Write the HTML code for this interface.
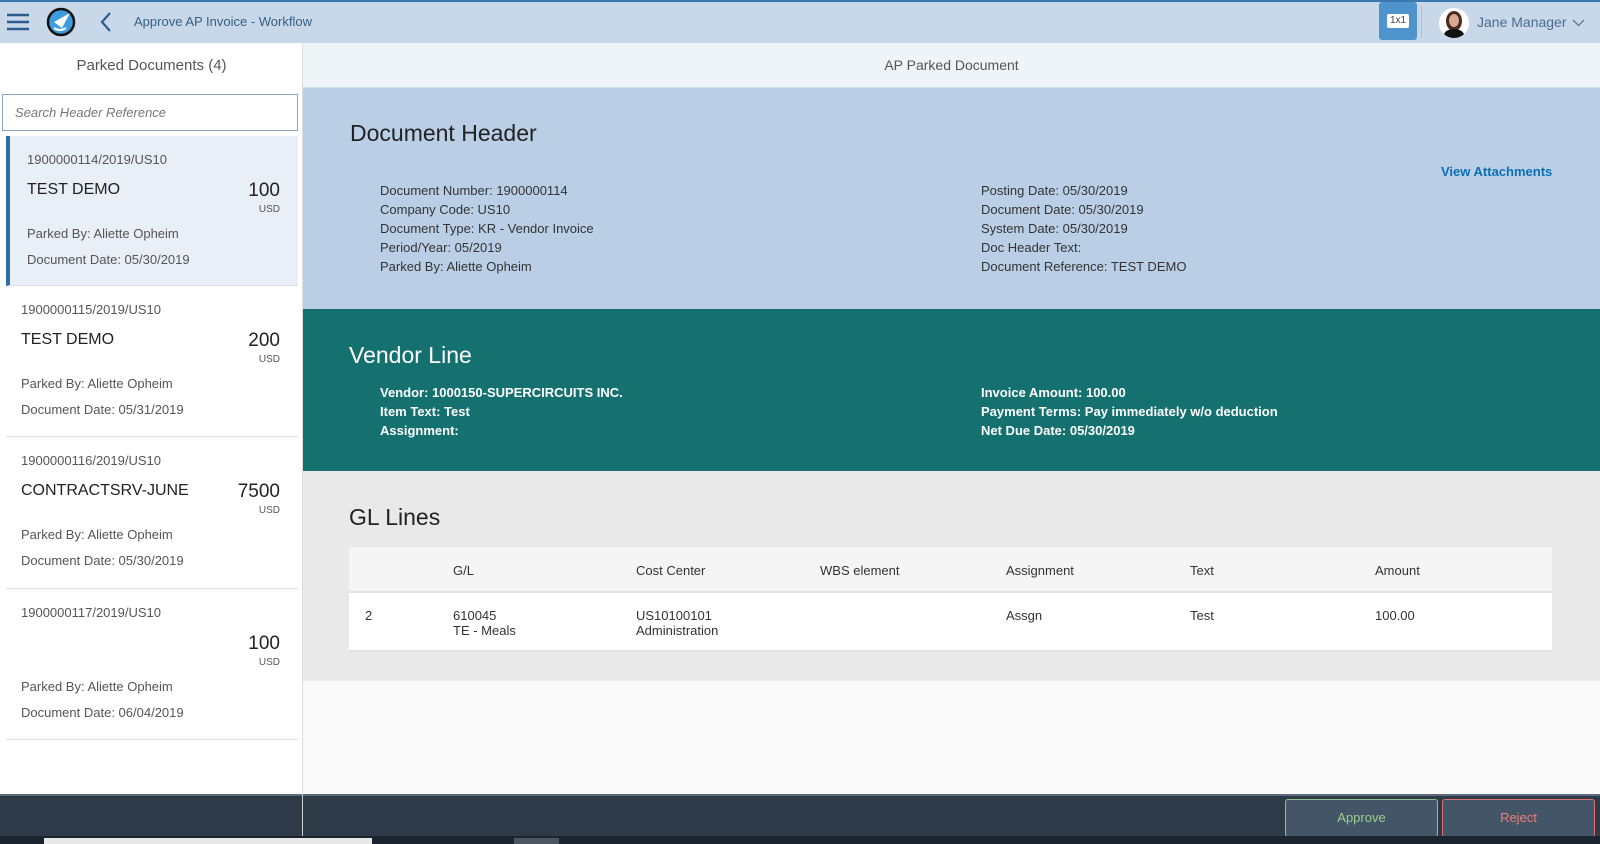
<!DOCTYPE html>
<html><head><meta charset="utf-8"><style>
*{box-sizing:border-box;margin:0;padding:0}
body{width:1600px;height:844px;overflow:hidden;font-family:"Liberation Sans",sans-serif;background:#fff;position:relative;color:#333}
.a{position:absolute}
.top{left:0;top:0;width:1600px;height:43px;background:#c9d8e9;border-top:2px solid #3a78b0}
.lp{left:0;top:43px;width:303px;height:751px;background:#fff;border-right:1px solid #ddd}
.item{position:absolute;left:6px;width:292px;border-bottom:1px solid #e0e0e0;font-size:13px;color:#555}
.item .t{position:absolute;font-size:16px;color:#222}
.item .n{position:absolute;right:18px;font-size:19px;color:#222}
.item .u{position:absolute;right:18px;font-size:10px;color:#555}
.dl{font-size:13px;color:#333;line-height:19px}
.vl{font-size:13px;color:#fff;font-weight:bold;line-height:19px}
</style></head><body>
<div class="a top">
 <svg class="a" style="left:7px;top:11px" width="22" height="18"><g stroke="#2a5d8d" stroke-width="2.4"><line x1="0" y1="2" x2="22" y2="2"/><line x1="0" y1="9" x2="22" y2="9"/><line x1="0" y1="16" x2="22" y2="16"/></g></svg>
 <svg class="a" style="left:46px;top:4px" width="30" height="32"><circle cx="15" cy="16" r="13" fill="#3d9be0" stroke="#111" stroke-width="2.5"/><path d="M8 16 L24 7 L16 22 Z" fill="#fff"/><path d="M8 22 Q14 26 20 22" stroke="#fff" stroke-width="2" fill="none"/></svg>
 <svg class="a" style="left:100px;top:10px" width="12" height="20"><path d="M10 1 L2 10 L10 19" stroke="#2a5d8d" stroke-width="2.2" fill="none"/></svg>
 <div class="a" style="left:134px;top:12px;font-size:13px;color:#346187">Approve AP Invoice - Workflow</div>
 <div class="a" style="left:1379px;top:0px;width:38px;height:38px;background:#4f93cd;border-radius:3px"><div class="a" style="left:8px;top:12px;width:22px;height:14px;background:#fff;border-radius:2px;font-size:10px;color:#444;text-align:center;line-height:14px">1x1</div></div>
 <div class="a" style="left:1421px;top:4px;width:1px;height:32px;background:#aebfd2"></div>
 <div class="a" style="left:1439px;top:6px;width:30px;height:30px;border-radius:50%;background:#fff;overflow:hidden"><div class="a" style="left:7px;top:3px;width:16px;height:20px;border-radius:50%;background:#4a2a20"></div><div class="a" style="left:10px;top:6px;width:10px;height:13px;border-radius:50%;background:#d9a890"></div><div class="a" style="left:5px;top:21px;width:20px;height:12px;border-radius:50%;background:#111"></div></div>
 <div class="a" style="left:1477px;top:12px;font-size:14px;color:#4a6d8f">Jane Manager</div>
 <svg class="a" style="left:1572px;top:17px" width="13" height="8"><path d="M1 1 L6.5 6.5 L12 1" stroke="#5a7897" stroke-width="1.3" fill="none"/></svg>
</div>
<div class="a lp">
 <div class="a" style="left:0;top:14px;width:303px;text-align:center;font-size:15px;color:#555">Parked Documents (4)</div>
 <div class="a" style="left:2px;top:51px;width:296px;height:37px;border:1px solid #89a6c5;background:#fff;font-size:13px;font-style:italic;color:#777;padding:10px 12px">Search Header Reference</div>
 <div class="item" style="top:93px;height:150px;background:#e8eff7;border-left:4px solid #2f6fa6">
  <div class="a" style="left:17px;top:16px">1900000114/2019/US10</div>
  <div class="t" style="left:17px;top:45px">TEST DEMO</div><div class="n" style="top:44px">100</div><div class="u" style="top:68px">USD</div>
  <div class="a" style="left:17px;top:90px">Parked By: Aliette Opheim</div>
  <div class="a" style="left:17px;top:116px">Document Date: 05/30/2019</div>
 </div>
 <div class="item" style="top:243px;height:151px">
  <div class="a" style="left:15px;top:16px">1900000115/2019/US10</div>
  <div class="t" style="left:15px;top:45px">TEST DEMO</div><div class="n" style="top:44px">200</div><div class="u" style="top:68px">USD</div>
  <div class="a" style="left:15px;top:90px">Parked By: Aliette Opheim</div>
  <div class="a" style="left:15px;top:116px">Document Date: 05/31/2019</div>
 </div>
 <div class="item" style="top:394px;height:152px">
  <div class="a" style="left:15px;top:16px">1900000116/2019/US10</div>
  <div class="t" style="left:15px;top:45px">CONTRACTSRV-JUNE</div><div class="n" style="top:44px">7500</div><div class="u" style="top:68px">USD</div>
  <div class="a" style="left:15px;top:90px">Parked By: Aliette Opheim</div>
  <div class="a" style="left:15px;top:116px">Document Date: 05/30/2019</div>
 </div>
 <div class="item" style="top:546px;height:151px">
  <div class="a" style="left:15px;top:16px">1900000117/2019/US10</div>
  <div class="n" style="top:44px">100</div><div class="u" style="top:68px">USD</div>
  <div class="a" style="left:15px;top:90px">Parked By: Aliette Opheim</div>
  <div class="a" style="left:15px;top:116px">Document Date: 06/04/2019</div>
 </div>
</div>
<div class="a" style="left:303px;top:43px;width:1297px;height:45px;background:#eff4f9;border-bottom:1px solid #d5dfea;font-size:14px;color:#555;text-align:center;line-height:45px">AP Parked Document</div>
<div class="a" style="left:303px;top:88px;width:1297px;height:221px;background:#bacfe6">
 <div class="a" style="left:47px;top:32px;font-size:23px;color:#222">Document Header</div>
 <div class="a" style="left:1138px;top:76px;font-size:13px;font-weight:bold;color:#0b6fb8">View Attachments</div>
 <div class="a dl" style="left:77px;top:93px">Document Number: 1900000114<br>Company Code: US10<br>Document Type: KR - Vendor Invoice<br>Period/Year: 05/2019<br>Parked By: Aliette Opheim</div>
 <div class="a dl" style="left:678px;top:93px">Posting Date: 05/30/2019<br>Document Date: 05/30/2019<br>System Date: 05/30/2019<br>Doc Header Text:<br>Document Reference: TEST DEMO</div>
</div>
<div class="a" style="left:303px;top:309px;width:1297px;height:162px;background:#147170">
 <div class="a" style="left:46px;top:33px;font-size:23px;color:#fff">Vendor Line</div>
 <div class="a vl" style="left:77px;top:74px">Vendor: 1000150-SUPERCIRCUITS INC.<br>Item Text: Test<br>Assignment:</div>
 <div class="a vl" style="left:678px;top:74px">Invoice Amount: 100.00<br>Payment Terms: Pay immediately w/o deduction<br>Net Due Date: 05/30/2019</div>
</div>
<div class="a" style="left:303px;top:471px;width:1297px;height:210px;background:#e9e9e9">
 <div class="a" style="left:46px;top:33px;font-size:23px;color:#222">GL Lines</div>
 <div class="a" style="left:46px;top:76px;width:1203px;height:46px;background:#f5f5f5;border-bottom:2px solid #e2e2e2"></div>
 <div class="a" style="left:46px;top:122px;width:1203px;height:59px;background:#fff;border-bottom:2px solid #e0e0e0"></div>
 <div class="a" style="left:0;top:0;font-size:13px;color:#333">
  <span class="a" style="left:150px;top:92px">G/L</span><span class="a" style="left:333px;top:92px;white-space:nowrap">Cost Center</span><span class="a" style="left:517px;top:92px;white-space:nowrap">WBS element</span><span class="a" style="left:703px;top:92px">Assignment</span><span class="a" style="left:887px;top:92px">Text</span><span class="a" style="left:1072px;top:92px">Amount</span>
  <span class="a" style="left:62px;top:137px">2</span><span class="a" style="left:150px;top:137px;white-space:nowrap;line-height:15px">610045<br>TE - Meals</span><span class="a" style="left:333px;top:137px;line-height:15px">US10100101<br>Administration</span><span class="a" style="left:703px;top:137px">Assgn</span><span class="a" style="left:887px;top:137px">Test</span><span class="a" style="left:1072px;top:137px">100.00</span>
 </div>
</div>
<div class="a" style="left:303px;top:681px;width:1297px;height:113px;background:#f9f9f9"></div>
<div class="a" style="left:0;top:794px;width:1600px;height:42px;background:#2f3a48;border-top:2px solid #5a6b7c"></div>
<div class="a" style="left:302px;top:794px;width:1px;height:42px;background:#ccc"></div>
<div class="a" style="left:1285px;top:799px;width:153px;height:38px;background:#435567;border:1px solid #8fc08f;border-radius:3px;color:#9ccf8f;font-size:13px;text-align:center;line-height:36px">Approve</div>
<div class="a" style="left:1442px;top:799px;width:153px;height:38px;background:#435567;border:1px solid #e06f6f;border-radius:3px;color:#f07a7a;font-size:13px;text-align:center;line-height:36px">Reject</div>
<div class="a" style="left:0;top:836px;width:1600px;height:8px;background:#1b2530"></div>
<div class="a" style="left:44px;top:838px;width:328px;height:6px;background:#e8e8e8"></div>
<div class="a" style="left:514px;top:838px;width:45px;height:6px;background:#4c5560"></div>
</body></html>
